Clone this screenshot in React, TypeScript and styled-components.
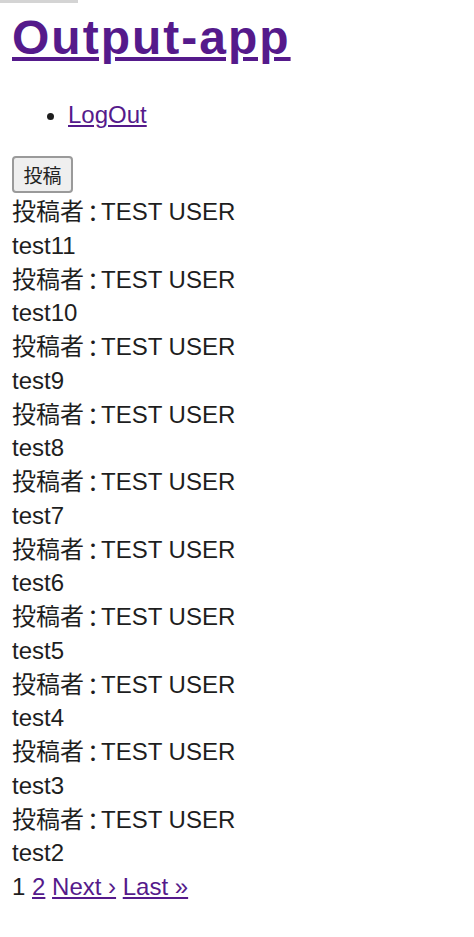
import React from "react";
import styled, { createGlobalStyle } from "styled-components";

const GlobalStyle = createGlobalStyle`
  html, body {
    margin: 0;
    padding: 0;
    background: #ffffff;
  }
  body {
    font-family: "Liberation Sans", "Noto Sans CJK JP", sans-serif;
    font-size: 24px;
    color: #1e1e1e;
  }
`;

const TopStrip = styled.div`
  width: 78px;
  height: 3px;
  background: #d4d4d4;
`;

const Page = styled.div`
  padding: 0 12px 40px;
`;

const Title = styled.h1`
  margin: 7px 0 32px;
  font-size: 48px;
  line-height: 56px;
  font-weight: bold;
  letter-spacing: 2px;

  a {
    color: #551a8b;
  }
`;

const Nav = styled.ul`
  margin: 0 0 24px;
  padding-left: 56px;
  line-height: 34px;

  a {
    color: #551a8b;
  }
`;

const PostButton = styled.button`
  display: block;
  width: 61px;
  height: 37px;
  padding: 0;
  font-family: "Noto Sans CJK JP", sans-serif;
  font-size: 19px;
  color: #222;
  background: #efefef;
  border: 2px solid #9a9a9a;
  border-radius: 4px;
`;

const PostList = styled.div`
  margin-top: 2px;
  line-height: 33.75px;
`;

const Line = styled.div`
  height: 33.75px;
`;

const Colon = styled.span`
  font-family: "Noto Sans CJK JP", sans-serif;
  font-feature-settings: "halt";
  line-height: 1;
  vertical-align: -2px;
  margin: 0 2px 0 3px;
`;

const Pager = styled.div`
  line-height: 33.75px;

  a {
    color: #551a8b;
  }
`;

const posts = ["test11", "test10", "test9", "test8", "test7", "test6", "test5", "test4", "test3", "test2"];

export default function App() {
  return (
    <>
      <GlobalStyle />
      <TopStrip />
      <Page>
        <Title>
          <a href="#">Output-app</a>
        </Title>
        <Nav>
          <li>
            <a href="#">LogOut</a>
          </li>
        </Nav>
        <PostButton>投稿</PostButton>
        <PostList>
          {posts.map((p) => (
            <React.Fragment key={p}>
              <Line>
                投稿者<Colon>：</Colon>TEST USER
              </Line>
              <Line>{p}</Line>
            </React.Fragment>
          ))}
        </PostList>
        <Pager>
          1 <a href="#">2</a> <a href="#">Next ›</a> <a href="#">Last »</a>
        </Pager>
      </Page>
    </>
  );
}
